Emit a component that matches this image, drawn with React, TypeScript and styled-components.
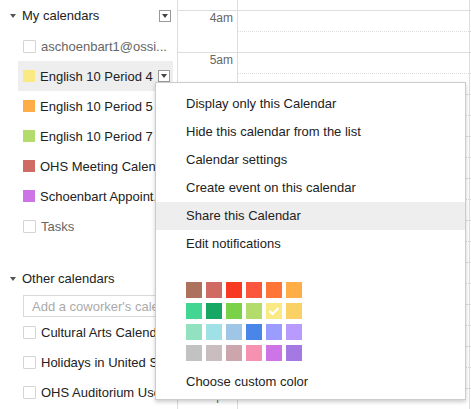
import styled, { createGlobalStyle } from "styled-components";

const GlobalStyle = createGlobalStyle`
    html, body {
        margin: 0;
        padding: 0;
        background: #fff;
    }
    body {
        font-family: "Liberation Sans", Arial, sans-serif;
        font-size: 13px;
        color: #222;
    }
`

const hours = ["3am", "4am", "5am", "6am", "7am", "8am", "9am", "10am", "11am", "12pm", "1pm"]

const myCalendars = [
    { name: "aschoenbart1@ossi...", color: "", muted: true },
    { name: "English 10 Period 4", color: "#fbe983", active: true },
    { name: "English 10 Period 5", color: "#ffad46" },
    { name: "English 10 Period 7", color: "#b3dc6c" },
    { name: "OHS Meeting Calendar", color: "#d06b64" },
    { name: "Schoenbart Appoint...", color: "#cd74e6" },
    { name: "Tasks", color: "", muted: true },
]

const otherCalendars = ["Cultural Arts Calendar", "Holidays in United States", "OHS Auditorium Use"]

const menuItems = [
    "Display only this Calendar",
    "Hide this calendar from the list",
    "Calendar settings",
    "Create event on this calendar",
    "Share this Calendar",
    "Edit notifications",
]

const palette = [
    ["#ac725e", "#d06b64", "#f83a22", "#fa573c", "#ff7537", "#ffad46"],
    ["#42d692", "#16a765", "#7bd148", "#b3dc6c", "#fbe983", "#fad165"],
    ["#92e1c0", "#9fe1e7", "#9fc6e7", "#4986e7", "#9a9cff", "#b99aff"],
    ["#c2c2c2", "#cabdbf", "#cca6ac", "#f691b2", "#cd74e6", "#a47ae2"],
]

// events peeking out in the next day column (top/height in px from 3am)
const events = [
    { top: 189, height: 18, bg: "#fdf3c2", border: "#f5e07a" },
    { top: 231, height: 27, bg: "#f3d9fa", border: "#cd74e6" },
    { top: 266, height: 19, bg: "#f3d9fa", border: "#cd74e6" },
    { top: 357, height: 26, bg: "#f3d9fa", border: "#cd74e6" },
    { top: 424, height: 26, bg: "#f3d9fa", border: "#cd74e6" },
]

const CheckIcon = () => (
    <svg width="12" height="10" viewBox="0 0 12 10">
        <path d="M1.5 5 L4.5 8 L10.5 2" stroke="#fff" strokeWidth="2.2" fill="none" />
    </svg>
)

const App = () => {
    return (
        <Page>
            <GlobalStyle />
            <Sidebar>
                <SectionHeader>
                    <Caret />
                    <SectionTitle>My calendars</SectionTitle>
                    <DropButton />
                </SectionHeader>
                <CalendarList>
                    {myCalendars.map((item) => (
                        <CalendarRow key={item.name} $active={item.active}>
                            {item.color ? <ColorChip $color={item.color} /> : <CheckBox />}
                            <CalendarName $muted={item.muted}>{item.name}</CalendarName>
                            {item.active && <DropButton />}
                        </CalendarRow>
                    ))}
                </CalendarList>
                <SectionHeader $spaced>
                    <Caret />
                    <SectionTitle>Other calendars</SectionTitle>
                </SectionHeader>
                <CoworkerInput placeholder="Add a coworker's calendar" />
                <CalendarList>
                    {otherCalendars.map((name) => (
                        <CalendarRow key={name}>
                            <CheckBox />
                            <CalendarName>{name}</CalendarName>
                        </CalendarRow>
                    ))}
                </CalendarList>
            </Sidebar>

            <Grid>
                <Gutter>
                    {hours.map((h) => (
                        <HourLabel key={h}>{h}</HourLabel>
                    ))}
                </Gutter>
                <DayColumn>
                    {hours.map((h) => (
                        <HourCell key={h} />
                    ))}
                </DayColumn>
                <DayColumn>
                    {hours.map((h) => (
                        <HourCell key={h} />
                    ))}
                    {events.map((ev, i) => (
                        <EventChip
                            key={i}
                            style={{ top: ev.top, height: ev.height, background: ev.bg, borderColor: ev.border }}
                        />
                    ))}
                </DayColumn>
            </Grid>

            <Menu>
                {menuItems.map((label) => (
                    <MenuItem key={label} $hover={label === "Share this Calendar"}>
                        {label}
                    </MenuItem>
                ))}
                <MenuDivider />
                <Swatches>
                    {palette.flat().map((c) => (
                        <Swatch key={c} $color={c}>
                            {c === "#fbe983" && <CheckIcon />}
                        </Swatch>
                    ))}
                </Swatches>
                <MenuItem>Choose custom color</MenuItem>
            </Menu>
        </Page>
    )
}

export default App

const Page = styled.div`
    position: relative;
    display: flex;
    width: 471px;
    height: 409px;
    overflow: hidden;
`

const Sidebar = styled.div`
    width: 177px;
    flex-shrink: 0;
    display: flex;
    flex-direction: column;
`

const SectionHeader = styled.div<{ $spaced?: boolean }>`
    display: flex;
    align-items: center;
    height: 31px;
    padding: 0 6px 0 10px;
    margin-top: ${(p) => (p.$spaced ? "22px" : "0")};
    margin-bottom: ${(p) => (p.$spaced ? "1px" : "0")};
    box-sizing: border-box;
`

const Caret = styled.span`
    width: 0;
    height: 0;
    border-left: 3.5px solid transparent;
    border-right: 3.5px solid transparent;
    border-top: 4px solid #555;
    margin-right: 6px;
`

const SectionTitle = styled.span`
    flex: 1;
    font-size: 13px;
    color: #222;
`

const DropButton = styled.span`
    width: 12px;
    height: 12px;
    box-sizing: border-box;
    border: 1px solid #999;
    background: #fff;
    display: flex;
    align-items: center;
    justify-content: center;
    flex-shrink: 0;
    margin-left: auto;
    &::after {
        content: "";
        border-left: 3px solid transparent;
        border-right: 3px solid transparent;
        border-top: 4px solid #444;
    }
`

const CalendarList = styled.div`
    display: flex;
    flex-direction: column;
    margin-left: 18px;
    width: 155px;
`

const CalendarRow = styled.div<{ $active?: boolean }>`
    display: flex;
    align-items: center;
    gap: 5px;
    height: 30px;
    padding: 0 6px 0 5px;
    background: ${(p) => (p.$active ? "#eeeeee" : "transparent")};
    white-space: nowrap;
`

const ColorChip = styled.span<{ $color: string }>`
    width: 12px;
    height: 12px;
    flex-shrink: 0;
    background: ${(p) => p.$color};
`

const CheckBox = styled.span`
    width: 13px;
    height: 13px;
    box-sizing: border-box;
    flex-shrink: 0;
    border: 1px solid #d4d4d4;
    border-radius: 1px;
    background: #fff;
`

const CalendarName = styled.span<{ $muted?: boolean }>`
    flex: none;
    white-space: nowrap;
    color: ${(p) => (p.$muted ? "#666" : "#222")};
`

const CoworkerInput = styled.input`
    margin-left: 23px;
    width: 150px;
    height: 22px;
    box-sizing: border-box;
    border: 1px solid #d9d9d9;
    padding: 0 8px;
    font-family: inherit;
    font-size: 13px;
    outline: none;
    &::placeholder {
        color: #aaa;
    }
`

const Grid = styled.div`
    display: flex;
    flex: 1;
    align-items: flex-start;
    margin-top: -32px;
`

const Gutter = styled.div`
    width: 60px;
    flex-shrink: 0;
    border-left: 1px solid #ddd;
    box-sizing: border-box;
`

const HourLabel = styled.div`
    height: 42px;
    box-sizing: border-box;
    border-top: 1px solid #ddd;
    padding: 0 4px 0 0;
    text-align: right;
    color: #666;
    font-size: 12px;
    line-height: 15px;
`

const DayColumn = styled.div`
    position: relative;
    width: 232px;
    flex-shrink: 0;
    border-left: 1px solid #ddd;
    box-sizing: border-box;
`

const HourCell = styled.div`
    height: 42px;
    box-sizing: border-box;
    border-top: 1px solid #ddd;
    &::after {
        content: "";
        display: block;
        margin-top: 20px;
        border-top: 1px dotted #ddd;
    }
`

const EventChip = styled.div`
    position: absolute;
    left: 1px;
    width: 60px;
    box-sizing: border-box;
    border: 1px solid;
    border-radius: 2px;
`

const Menu = styled.div`
    position: absolute;
    left: 155px;
    top: 82px;
    width: 311px;
    height: 318px;
    box-sizing: border-box;
    padding: 7px 0 4px;
    background: #fff;
    border: 1px solid rgba(0, 0, 0, 0.2);
    box-shadow: 0 2px 4px rgba(0, 0, 0, 0.2);
    display: flex;
    flex-direction: column;
`

const MenuItem = styled.div<{ $hover?: boolean }>`
    height: 28px;
    line-height: 28px;
    padding-left: 30px;
    color: #222;
    font-size: 13px;
    white-space: nowrap;
    background: ${(p) => (p.$hover ? "#eeeeee" : "transparent")};
`

const MenuDivider = styled.div`
    height: 1px;
    background: #e5e5e5;
    margin: 7px 0 17px;
`

const Swatches = styled.div`
    display: grid;
    grid-template-columns: repeat(6, 16px);
    grid-auto-rows: 16px;
    gap: 5px 4px;
    padding-left: 30px;
    margin-bottom: 7px;
`

const Swatch = styled.div<{ $color: string }>`
    background: ${(p) => p.$color};
    display: flex;
    align-items: center;
    justify-content: center;
`
